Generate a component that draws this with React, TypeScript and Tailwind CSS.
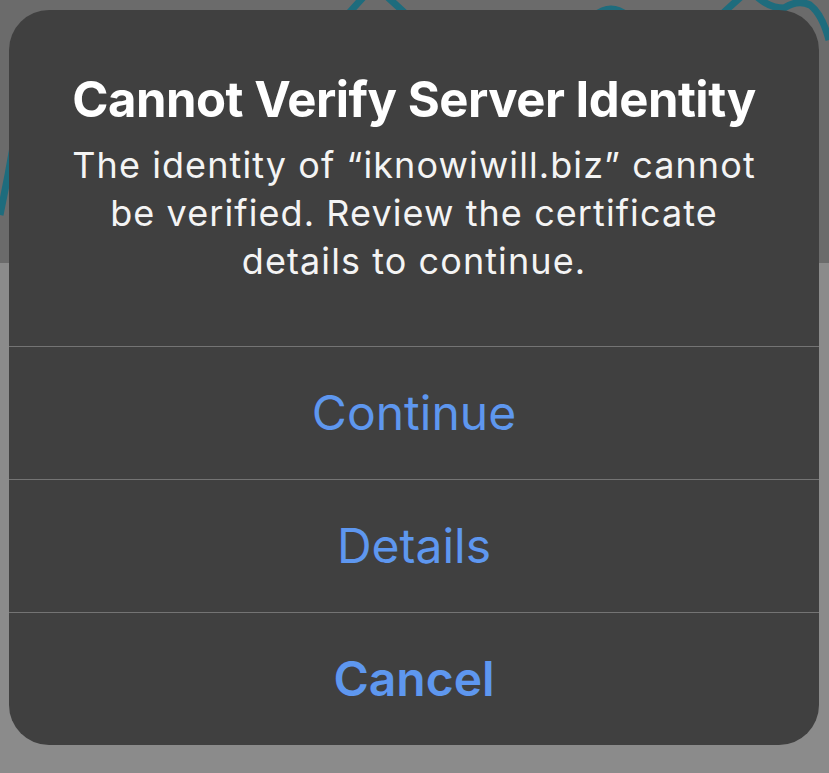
import React from "react";

const actions = [
  { label: "Continue", bold: false },
  { label: "Details", bold: false },
  { label: "Cancel", bold: true },
];

function Backdrop() {
  return (
    <div className="absolute inset-0 flex flex-col">
      <div className="h-[263px] bg-[#6b6b6b]" />
      <div className="flex-1 bg-[#8b8b8b]" />
      <svg className="absolute inset-0" width="829" height="773" viewBox="0 0 829 773" fill="none">
        <path d="M348 14 L368 -8 M382 -8 L406 14" stroke="#1e6c7d" strokeWidth="7" />
        <path d="M594 16 Q611 2 628 16" stroke="#1e6c7d" strokeWidth="7" />
        <path d="M722 14 L744 -6 M754 -6 Q768 8 784 8 Q798 -1 810 5 Q822 14 829 40" stroke="#1e6c7d" strokeWidth="7" />
        <path d="M0 215 L8 175 L16 130" stroke="#1e6c7d" strokeWidth="7" />
      </svg>
    </div>
  );
}

export default function App() {
  return (
    <div className="relative w-[829px] h-[773px] overflow-hidden font-['Inter','Noto_Sans',sans-serif]">
      <Backdrop />
      <div className="relative pt-[10px] pl-[9px]">
        <div className="w-[810px] rounded-[40px] bg-[#404040] overflow-hidden">
          <div className="h-[336px] pt-[64px] flex flex-col items-center text-center text-white">
            <h1 className="text-[49px] leading-[52px] font-bold tracking-[-0.01em]">Cannot Verify Server Identity</h1>
            <p className="mt-[15px] text-[36px] leading-[48px] tracking-[0.03em] text-[#f4f4f4]">
              The identity of “iknowiwill.biz” cannot
              <br />
              be verified. Review the certificate
              <br />
              details to continue.
            </p>
          </div>
          {actions.map((a) => (
            <div key={a.label} className="border-t border-[#747474] h-[133px] flex items-center justify-center">
              <span className={`text-[48px] leading-none text-[#5e97ef] ${a.bold ? "font-semibold" : "font-normal"}`}>
                {a.label}
              </span>
            </div>
          ))}
        </div>
      </div>
    </div>
  );
}
